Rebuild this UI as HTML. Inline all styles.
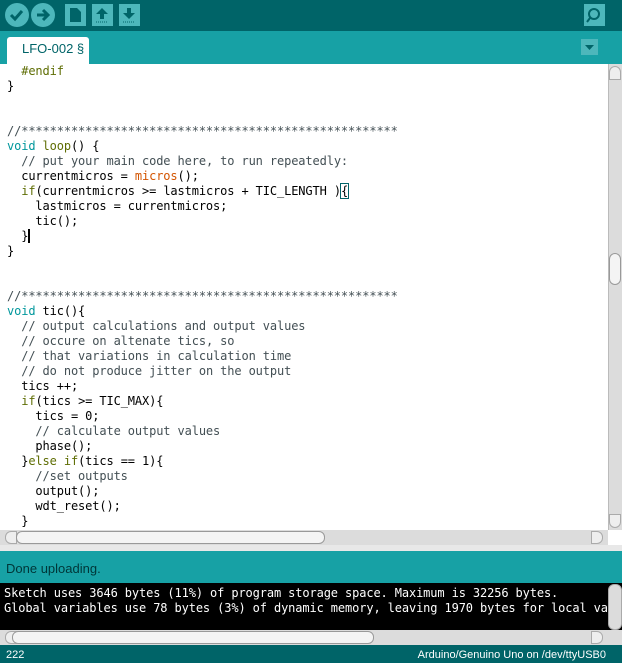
<!DOCTYPE html><html><head><style>
*{margin:0;padding:0;box-sizing:border-box}
body{width:622px;height:663px;overflow:hidden;background:#fff;position:relative;font-family:"Liberation Sans",sans-serif}
.a{position:absolute}
pre{font-family:"DejaVu Sans Mono",monospace;font-size:12px;line-height:15px;color:#000;letter-spacing:-0.12px}
.c{color:#434f54}.k{color:#00979c}.f{color:#5e6d03}.o{color:#d35400}
</style></head><body>
<div class="a" style="left:0;top:0;width:622px;height:31px;background:#006468"></div>
<svg class="a" style="left:0;top:0" width="622" height="31">
<circle cx="17" cy="15" r="12" fill="#4db7bb"/><path d="M11 15l4 4 7-8" stroke="#006468" stroke-width="3" fill="none"/>
<circle cx="43" cy="15" r="12" fill="#4db7bb"/><path d="M37 15h10M43 10l5 5-5 5" stroke="#006468" stroke-width="3" fill="none"/>
<rect x="65" y="4" width="21" height="22" fill="#4db7bb"/><path d="M70 8h7l4 4v10h-11z" fill="#006468"/>
<rect x="92" y="4" width="21" height="22" fill="#4db7bb"/><path d="M102 8l6 6h-4v5h-4v-5h-4z" fill="#006468"/><path d="M96 22h12" stroke="#006468" stroke-dasharray="1 1"/>
<rect x="119" y="4" width="21" height="22" fill="#4db7bb"/><path d="M127 8h4v5h4l-6 6-6-6h4z" fill="#006468"/><path d="M123 22h12" stroke="#006468" stroke-dasharray="1 1"/>
<rect x="584" y="4" width="21" height="22" fill="#4db7bb"/><circle cx="594" cy="14" r="5" stroke="#006468" stroke-width="2" fill="none"/><path d="M590 18l-3 4" stroke="#006468" stroke-width="2"/>
</svg>
<div class="a" style="left:0;top:31px;width:622px;height:33px;background:#17a1a5"></div>
<div class="a" style="left:7px;top:37px;width:82px;height:27px;background:#fff;border-radius:3px 3px 0 0"></div>
<div class="a" style="left:22px;top:41px;font-size:13px;color:#006468">LFO-002 §</div>
<div class="a" style="left:581px;top:39px;width:17px;height:16px;background:#4db7bb"></div>
<svg class="a" style="left:581px;top:39px" width="17" height="16"><path d="M4 6h9l-4.5 5z" fill="#006468"/></svg>
<pre class="a" style="left:7px;top:64px">  <span class="f">#endif</span>
}


<span class="c">//*****************************************************</span>
<span class="k">void</span> <span class="f">loop</span>() {
  <span class="c">// put your main code here, to run repeatedly:</span>
  currentmicros = <span class="o">micros</span>();
  <span class="f">if</span>(currentmicros &gt;= lastmicros + TIC_LENGTH )<span style="outline:1px solid #006468">{</span>
    lastmicros = currentmicros;
    tic();
  }<span style="border-left:2px solid #000;margin-left:0"></span>
}


<span class="c">//*****************************************************</span>
<span class="k">void</span> tic(){
  <span class="c">// output calculations and output values</span>
  <span class="c">// occure on altenate tics, so</span>
  <span class="c">// that variations in calculation time</span>
  <span class="c">// do not produce jitter on the output</span>
  tics ++;
  <span class="f">if</span>(tics &gt;= TIC_MAX){
    tics = 0;
    <span class="c">// calculate output values</span>
    phase();
  }<span class="f">else</span> <span class="f">if</span>(tics == 1){
    <span class="c">//set outputs</span>
    output();
    wdt_reset();
  }</pre>
<div class="a" style="left:608px;top:64px;width:14px;height:466px;background:#dcdcdc;border-left:1px solid #bbb"></div>
<div class="a" style="left:609px;top:66px;width:12px;height:14px;background:#eee;border:1px solid #aaa;border-radius:6px 6px 0 0"></div>
<div class="a" style="left:609px;top:253px;width:12px;height:32px;background:#f4f4f4;border:1px solid #999;border-radius:6px"></div>
<div class="a" style="left:609px;top:514px;width:12px;height:14px;background:#eee;border:1px solid #aaa;border-radius:0 0 6px 6px"></div>
<div class="a" style="left:0;top:530px;width:608px;height:15px;background:#dcdcdc"></div>
<div class="a" style="left:5px;top:531px;width:12px;height:13px;background:#eee;border:1px solid #aaa;border-radius:6px 0 0 6px"></div>
<div class="a" style="left:16px;top:531px;width:309px;height:13px;background:#f4f4f4;border:1px solid #999;border-radius:6px"></div>
<div class="a" style="left:591px;top:531px;width:12px;height:13px;background:#eee;border:1px solid #aaa;border-radius:0 6px 6px 0"></div>
<div class="a" style="left:0;top:545px;width:622px;height:6px;background:#e8e8e8"></div>
<div class="a" style="left:0;top:551px;width:622px;height:32px;background:#17a1a5"></div>
<div class="a" style="left:6px;top:561px;font-size:13px;color:#003638">Done uploading.</div>
<div class="a" style="left:0;top:583px;width:622px;height:47px;background:#000"></div>
<pre class="a" style="left:4px;top:586px;color:#fff;white-space:pre;width:604px;overflow:hidden">Sketch uses 3646 bytes (11%) of program storage space. Maximum is 32256 bytes.
Global variables use 78 bytes (3%) of dynamic memory, leaving 1970 bytes for local variables.</pre>
<div class="a" style="left:608px;top:584px;width:14px;height:46px;background:#dcdcdc;border:1px solid #aaa;border-radius:6px"></div>
<div class="a" style="left:0;top:630px;width:622px;height:15px;background:#dcdcdc"></div>
<div class="a" style="left:5px;top:631px;width:12px;height:13px;background:#eee;border:1px solid #aaa;border-radius:6px 0 0 6px"></div>
<div class="a" style="left:12px;top:631px;width:362px;height:13px;background:#f4f4f4;border:1px solid #999;border-radius:6px"></div>
<div class="a" style="left:591px;top:631px;width:12px;height:13px;background:#eee;border:1px solid #aaa;border-radius:0 6px 6px 0"></div>
<div class="a" style="left:0;top:645px;width:622px;height:18px;background:#006468"></div>
<div class="a" style="left:6px;top:649px;font-size:11px;color:#fff">222</div>
<div class="a" style="right:16px;top:649px;font-size:11px;color:#fff">Arduino/Genuino Uno on /dev/ttyUSB0</div>
</body></html>
